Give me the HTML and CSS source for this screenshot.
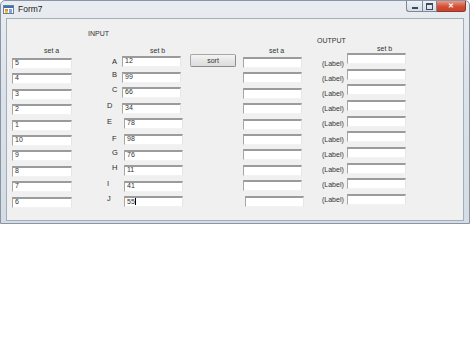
FILE: index.html
```html
<!DOCTYPE html>
<html lang="en">
<head>
  <meta charset="UTF-8" />
  <title>Form7</title>
  <link rel="stylesheet" href="styles.css">
</head>
<body>
<div class="window">
  <div class="titlebar">
    <div class="title">
      <svg class="app-icon" width="11" height="9" viewBox="0 0 11 9">
        <rect x="0.5" y="0.5" width="10" height="8" fill="#fff" stroke="#6a7f9c"/>
        <rect x="1" y="1" width="9" height="2" fill="#3f6fb5"/>
        <rect x="2" y="4" width="3" height="2" fill="#e8902c"/>
        <rect x="2" y="6" width="3" height="2" fill="#f2c532"/>
        <rect x="6" y="4" width="3" height="4" fill="#7fa6d8"/>
      </svg>
      <span>Form7</span>
    </div>
    <div class="caption-btns">
      <span class="cbtn min"><i></i></span>
      <span class="cbtn max"><i></i></span>
      <span class="cbtn close">&#x2715;</span>
    </div>
  </div>
  <div class="client">
    <div class="col col-in-a">
      <div class="hd">set a</div>
      <div class="stack">
        <div class="tb">5</div>
        <div class="tb">4</div>
        <div class="tb">3</div>
        <div class="tb">2</div>
        <div class="tb">1</div>
        <div class="tb">10</div>
        <div class="tb">9</div>
        <div class="tb">8</div>
        <div class="tb">7</div>
        <div class="tb">6</div>
      </div>
    </div>

    <div class="col col-in-b">
      <div class="group">INPUT</div>
      <div class="hd">set b</div>
      <div class="stack">
        <div class="row"><span class="letter low-a">A</span><div class="tb">12</div></div>
        <div class="row"><span class="letter">B</span><div class="tb">99</div></div>
        <div class="row"><span class="letter">C</span><div class="tb">66</div></div>
        <div class="row"><span class="letter out">D</span><div class="tb">34</div></div>
        <div class="row"><span class="letter out low-e">E</span><div class="tb shift">78</div></div>
        <div class="row"><span class="letter low-f">F</span><div class="tb shift">98</div></div>
        <div class="row"><span class="letter">G</span><div class="tb shift">76</div></div>
        <div class="row"><span class="letter">H</span><div class="tb shift">11</div></div>
        <div class="row"><span class="letter out">I</span><div class="tb shift">41</div></div>
        <div class="row"><span class="letter out">J</span><div class="tb shift">55<span class="caret"></span></div></div>
      </div>
    </div>

    <div class="col col-sort">
      <button class="sort-btn">sort</button>
    </div>

    <div class="col col-out-a">
      <div class="hd">set a</div>
      <div class="stack">
        <div class="tb"></div>
        <div class="tb"></div>
        <div class="tb"></div>
        <div class="tb"></div>
        <div class="tb"></div>
        <div class="tb"></div>
        <div class="tb"></div>
        <div class="tb"></div>
        <div class="tb"></div>
        <div class="tb shift"></div>
      </div>
    </div>

    <div class="col col-labels">
      <div class="group">OUTPUT</div>
      <div class="labels">
        <div class="lbl">(Label)</div>
        <div class="lbl">(Label)</div>
        <div class="lbl">(Label)</div>
        <div class="lbl">(Label)</div>
        <div class="lbl">(Label)</div>
        <div class="lbl">(Label)</div>
        <div class="lbl">(Label)</div>
        <div class="lbl">(Label)</div>
        <div class="lbl">(Label)</div>
        <div class="lbl">(Label)</div>
      </div>
    </div>

    <div class="col col-out-b">
      <div class="hd">set b</div>
      <div class="stack">
        <div class="tb"></div>
        <div class="tb"></div>
        <div class="tb"></div>
        <div class="tb"></div>
        <div class="tb"></div>
        <div class="tb"></div>
        <div class="tb"></div>
        <div class="tb"></div>
        <div class="tb"></div>
        <div class="tb"></div>
      </div>
    </div>
  </div>
</div>
</body>
</html>
```

FILE: styles.css
```css
body {
  margin: 0;
  background: #fff;
  font-family: 'Liberation Sans', Arial, sans-serif;
  color: #333;
}
.window {
  width: 470px;
  height: 224px;
  box-sizing: border-box;
  padding: 0 5px 2px;
  border: 1px solid #8995a4;
  border-radius: 5px 5px 0 0;
  background: linear-gradient(to bottom, #e9edf2, #dce2e9 40%, #d5dce4);
}
.titlebar {
  height: 17px;
  margin: 0 -3px;
  display: flex;
  justify-content: space-between;
  align-items: flex-start;
}
.title {
  display: flex;
  align-items: center;
  gap: 4px;
  padding-top: 3px;
  font-size: 8.5px;
  line-height: 10px;
  color: #1b1b1b;
}
.app-icon {
  display: block;
}
.caption-btns {
  display: flex;
  margin-right: 1px;
}
.cbtn {
  height: 11px;
  box-sizing: border-box;
  border: 1px solid #7c8898;
  border-top: none;
  display: flex;
  align-items: center;
  justify-content: center;
  background: linear-gradient(to bottom, #eef2f6, #d5dde6);
}
.cbtn.min {
  width: 16px;
  border-radius: 0 0 0 3px;
  border-right: none;
}
.cbtn.min i {
  width: 6px;
  height: 2px;
  margin-top: 3px;
  background: #3d4a5a;
}
.cbtn.max {
  width: 15px;
}
.cbtn.max i {
  width: 5px;
  height: 4px;
  border: 1px solid #3d4a5a;
  border-top-width: 2px;
}
.cbtn.close {
  width: 29px;
  border-left: none;
  border-color: #8a3a2c;
  border-radius: 0 0 3px 0;
  background: linear-gradient(to bottom, #e99c88, #d54f35 55%, #c9432b);
  color: #fff;
  font-size: 7px;
  font-weight: bold;
}
.client {
  height: 203px;
  box-sizing: border-box;
  border: 1px solid #a3aebb;
  background: #f0f0f0;
  display: flex;
  align-items: flex-start;
  font-size: 7px;
}
.col {
  display: flex;
  flex-direction: column;
  flex-shrink: 0;
}
.hd, .group {
  height: 8px;
  line-height: 8px;
  white-space: nowrap;
}
.stack {
  display: flex;
  flex-direction: column;
}
.tb {
  width: 60px;
  height: 11px;
  box-sizing: border-box;
  padding-left: 2px;
  background: #fff;
  border-top: 2px solid #9b9b9b;
  border-left: 1px solid #a6a6a6;
  border-right: 1px solid #e6e6e6;
  border-bottom: 1px solid #f2f2f2;
  line-height: 6px;
  white-space: nowrap;
}
.caret {
  display: inline-block;
  width: 1px;
  height: 7px;
  margin-left: 0.5px;
  vertical-align: -1px;
  background: #000;
}

.col-in-a {
  margin-left: 5px;
  width: 60px;
  padding-top: 28px;
}
.col-in-a .hd {
  padding-left: 32px;
}
.col-in-a .stack {
  margin-top: 3px;
  gap: 4.4px;
}

.col-in-b {
  margin-left: 16px;
  width: 96px;
  padding-top: 11px;
}
.col-in-b .hd {
  margin-top: 8.7px;
  padding-left: 62px;
}
.col-in-b .stack {
  margin-top: 1.3px;
  gap: 4.6px;
}
.row {
  display: flex;
  align-items: flex-start;
  height: 11px;
}
.row .tb {
  width: 59px;
}
.tb.shift {
  margin-left: 2px;
}
.letter {
  width: 34px;
  box-sizing: border-box;
  padding-left: 24px;
  line-height: 6px;
  font-size: 7.5px;
  color: #2a2a2a;
}
.letter.out {
  padding-left: 19px;
}
.letter.low-a {
  margin-top: 3.5px;
}
.letter.low-e {
  margin-top: 1px;
}
.letter.low-f {
  margin-top: 2.5px;
}

.col-sort {
  margin-left: 6px;
  padding-top: 35px;
}
.sort-btn {
  width: 46px;
  height: 13px;
  padding: 0;
  border: 1px solid #a8a8a8;
  border-right-color: #8c8c8c;
  border-bottom-color: #8c8c8c;
  border-radius: 2px;
  background: linear-gradient(to bottom, #f4f4f4, #e6e6e6 50%, #dcdcdc);
  font-family: 'Liberation Sans', Arial, sans-serif;
  font-size: 7px;
  line-height: 11px;
  color: #333;
}

.col-out-a {
  margin-left: 7px;
  width: 61px;
  padding-top: 27.7px;
}
.col-out-a .hd {
  padding-left: 26px;
}
.col-out-a .stack {
  margin-top: 2.3px;
  gap: 4.4px;
}
.col-out-a .tb {
  width: 59px;
}

.col-labels {
  margin-left: 13px;
  width: 30px;
  padding-top: 18.2px;
}
.labels {
  margin-top: 10.9px;
}
.lbl {
  height: 15.1px;
  line-height: 15.1px;
  padding-left: 5px;
  white-space: nowrap;
}

.col-out-b {
  width: 59px;
  padding-top: 25.7px;
}
.col-out-b .hd {
  padding-left: 30px;
}
.col-out-b .stack {
  margin-top: 0.3px;
  gap: 4.7px;
}
.col-out-b .tb {
  width: 59px;
}
```
